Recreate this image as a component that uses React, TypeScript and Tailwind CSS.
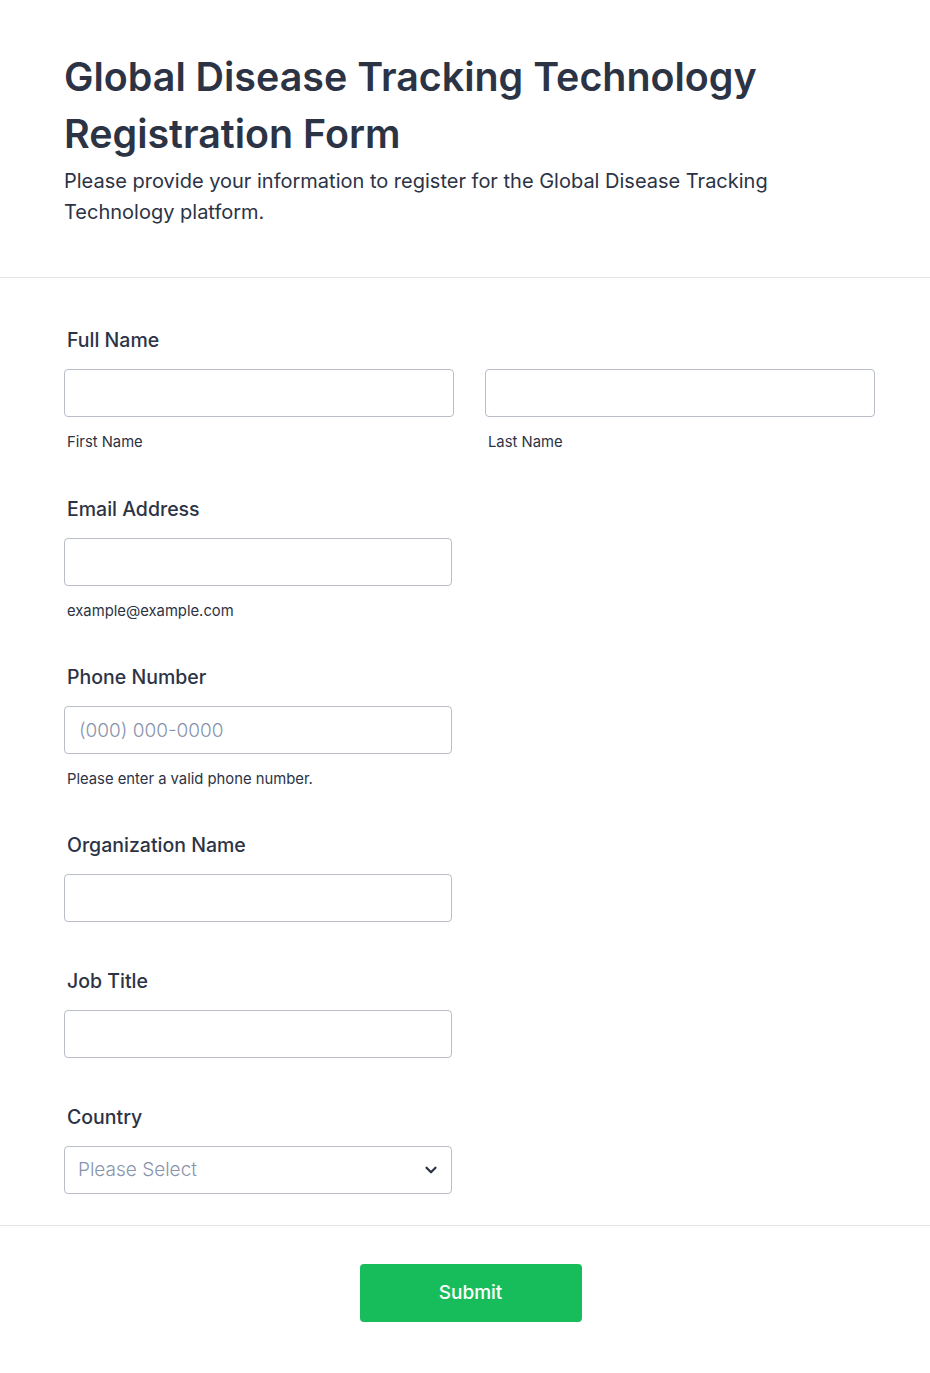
import React from 'react';

const font = { fontFamily: 'Inter, "Noto Sans", sans-serif' };

function Field({ label, sub, pb, children }: { label: string; sub?: string; pb?: string; children: React.ReactNode }) {
  return (
    <div className={pb ?? (sub ? 'pb-[42px]' : 'pb-[45px]')}>
      <label className="block text-[19.5px] leading-[28px] font-medium text-[#2c3345] pl-[3px]">{label}</label>
      <div className="mt-[15px]">{children}</div>
      {sub && <div className="mt-[15px] text-[14.8px] leading-[20px] text-[#2c3345] pl-[3px]">{sub}</div>}
    </div>
  );
}

const inputCls =
  'block w-full h-[48px] rounded-[4px] border border-[#b8bdc9] bg-white px-[14px] text-[19px] font-light text-[#2c3345] placeholder-[#8894ab] outline-none';

export default function App() {
  return (
    <div className="min-h-[1373px] bg-white" style={font}>
      <header className="px-16 pt-[49px] pb-[49px] border-b border-[#e3e5ea]">
        <h1 className="text-[39.4px] leading-[57px] font-semibold text-[#2c3345]">
          Global Disease Tracking Technology
          <br />
          Registration Form
        </h1>
        <p className="mt-[3px] text-[20px] leading-[31px] text-[#2c3345] max-w-[740px]">
          Please provide your information to register for the Global Disease Tracking Technology platform.
        </p>
      </header>

      <form className="px-16 pt-[48px]" onSubmit={(e) => e.preventDefault()}>
        <Field label="Full Name" pb="pb-[42px]">
          <div className="grid grid-cols-2 gap-[31px] w-[811px]">
            <div>
              <input className={inputCls} />
              <div className="mt-[15px] text-[14.8px] leading-[20px] text-[#2c3345] pl-[3px]">First Name</div>
            </div>
            <div>
              <input className={inputCls} />
              <div className="mt-[15px] text-[14.8px] leading-[20px] text-[#2c3345] pl-[3px]">Last Name</div>
            </div>
          </div>
        </Field>

        <div className="w-[388px] pt-px">
          <Field label="Email Address" sub="example@example.com">
            <input className={inputCls} type="email" />
          </Field>
          <Field label="Phone Number" sub="Please enter a valid phone number.">
            <input className={inputCls} placeholder="(000) 000-0000" />
          </Field>
          <Field label="Organization Name">
            <input className={inputCls} />
          </Field>
          <Field label="Job Title">
            <input className={inputCls} />
          </Field>
          <div className="pb-[31px]">
            <label className="block text-[19.5px] leading-[28px] font-medium text-[#2c3345] pl-[3px]">Country</label>
            <div className="mt-[15px]">
              <div className="flex items-center justify-between h-[48px] rounded-[4px] border border-[#b8bdc9] bg-white pl-[13px] pr-[11px]">
                <span className="text-[19px] font-light text-[#8894ab]">Please Select</span>
                <svg width="18" height="18" viewBox="0 0 24 24" fill="none" stroke="#2c3345" strokeWidth="3" strokeLinecap="round" strokeLinejoin="round">
                  <path d="M6 9l6 6 6-6" />
                </svg>
              </div>
            </div>
          </div>
        </div>
      </form>

      <div className="border-t border-[#e3e5ea] pt-[38px] pb-[51px] flex justify-center">
        <button
          type="button"
          className="ml-[11px] w-[222px] h-[58px] rounded-[4px] bg-[#18bd5b] text-white text-[19px] font-medium"
        >
          Submit
        </button>
      </div>
    </div>
  );
}
